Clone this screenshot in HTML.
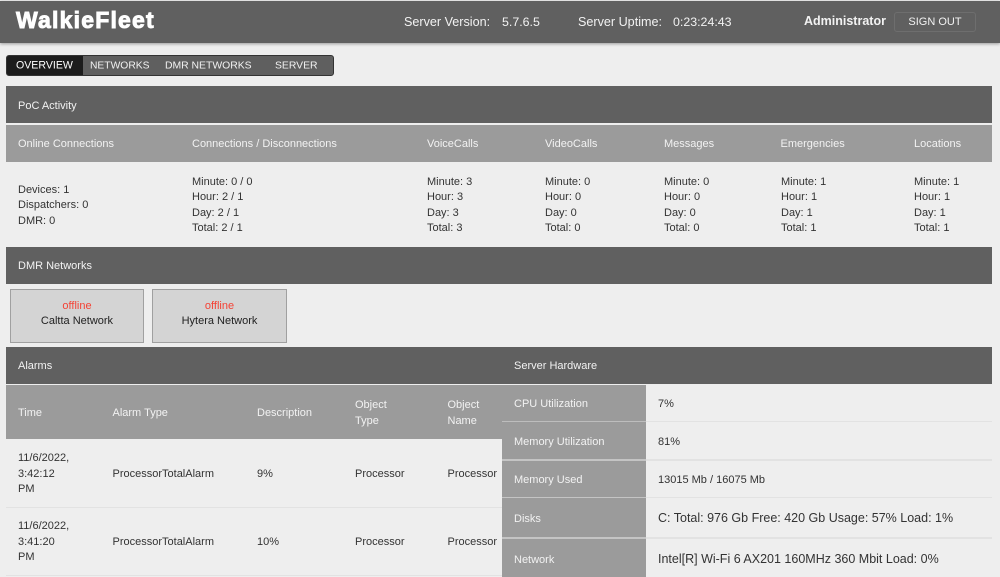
<!DOCTYPE html>
<html><head><meta charset="utf-8"><style>
html,body{margin:0;padding:0;width:1000px;height:577px;overflow:hidden;background:#eeeeee}
body{position:relative;font-family:"Liberation Sans",sans-serif;font-size:11px;color:#333}
.a{position:absolute}
.t{position:absolute;white-space:nowrap;line-height:15px}
.d{background:#606060}
.g{background:#9b9b9b}
.w{color:#f2f2f2}
.m{line-height:15.33px}
</style></head><body>
<div class="a d" style="left:0;top:1px;width:1000px;height:42px;box-shadow:0 1px 3px rgba(0,0,0,.35)"></div>
<div class="t" style="left:16px;top:6px;font-size:23px;line-height:28px;font-weight:bold;color:#fff;-webkit-text-stroke:.9px #fff;letter-spacing:1.2px">WalkieFleet</div>
<div class="t w" style="left:404px;top:15px;font-size:12.6px">Server Version:</div>
<div class="t w" style="left:502px;top:15px;font-size:12.4px">5.7.6.5</div>
<div class="t w" style="left:578px;top:15px;font-size:12.6px">Server Uptime:</div>
<div class="t w" style="left:673px;top:15px;font-size:12.4px">0:23:24:43</div>
<div class="t w" style="left:804px;top:14px;font-size:12.5px;font-weight:bold">Administrator</div>
<div class="a w" style="left:894px;top:12px;width:80px;height:18px;border:1px solid #6e6e6e;border-radius:3px;text-align:center;line-height:19px;font-size:11px">SIGN OUT</div>

<div class="a" style="left:6px;top:55px;width:326px;height:19px;background:#5f5f5f;border:1px solid #333;border-radius:3px;overflow:hidden">
<div class="a" style="left:0;top:0;width:76px;height:19px;background:#1c1c1c"></div></div>
<div class="t" style="left:16px;top:58px;color:#fff;font-size:10.6px;transform:translateY(.7px)">OVERVIEW</div>
<div class="t w" style="left:90px;top:58px;font-size:10.3px;transform:translateY(.7px)">NETWORKS</div>
<div class="t w" style="left:165px;top:58px;font-size:10.4px;transform:translateY(.7px)">DMR NETWORKS</div>
<div class="t w" style="left:275px;top:58px;font-size:10.4px;transform:translateY(.7px)">SERVER</div>

<div class="a d" style="left:6px;top:86px;width:986px;height:37px"></div>
<div class="t w" style="left:18px;top:99px">PoC Activity</div>
<div class="a g" style="left:6px;top:125px;width:986px;height:37px"></div>
<div class="t w" style="left:18px;top:137px">Online Connections</div>
<div class="t w" style="left:192px;top:137px">Connections / Disconnections</div>
<div class="t w" style="left:427px;top:137px">VoiceCalls</div>
<div class="t w" style="left:545px;top:137px">VideoCalls</div>
<div class="t w" style="left:664px;top:137px">Messages</div>
<div class="t w" style="left:780.5px;top:137px">Emergencies</div>
<div class="t w" style="left:914px;top:137px">Locations</div>

<div class="t m" style="left:18px;top:183px">Devices: 1<br>Dispatchers: 0<br>DMR: 0</div>
<div class="t m" style="left:192px;top:175px">Minute: 0 / 0<br>Hour: 2 / 1<br>Day: 2 / 1<br>Total: 2 / 1</div>
<div class="t m" style="left:427px;top:175px">Minute: 3<br>Hour: 3<br>Day: 3<br>Total: 3</div>
<div class="t m" style="left:545px;top:175px">Minute: 0<br>Hour: 0<br>Day: 0<br>Total: 0</div>
<div class="t m" style="left:664px;top:175px">Minute: 0<br>Hour: 0<br>Day: 0<br>Total: 0</div>
<div class="t m" style="left:781px;top:175px">Minute: 1<br>Hour: 1<br>Day: 1<br>Total: 1</div>
<div class="t m" style="left:914px;top:175px">Minute: 1<br>Hour: 1<br>Day: 1<br>Total: 1</div>

<div class="a d" style="left:6px;top:247px;width:986px;height:37px"></div>
<div class="t w" style="left:18px;top:259px">DMR Networks</div>

<div class="a" style="left:10px;top:289px;width:132px;height:52px;background:#d4d4d4;border:1px solid #a0a0a0"></div>
<div class="a" style="left:152px;top:289px;width:133px;height:52px;background:#d4d4d4;border:1px solid #a0a0a0"></div>
<div class="t" style="left:10px;width:134px;text-align:center;top:299px;color:#f44336">offline</div>
<div class="t" style="left:10px;width:134px;text-align:center;top:314px;color:#222">Caltta Network</div>
<div class="t" style="left:152px;width:135px;text-align:center;top:299px;color:#f44336">offline</div>
<div class="t" style="left:152px;width:135px;text-align:center;top:314px;color:#222">Hytera Network</div>

<div class="a d" style="left:6px;top:347px;width:986px;height:37px"></div>
<div class="t w" style="left:18px;top:359px">Alarms</div>
<div class="t w" style="left:514px;top:359px">Server Hardware</div>

<div class="a g" style="left:6px;top:385px;width:496px;height:54px"></div>
<div class="t w" style="left:18px;top:406px">Time</div>
<div class="t w" style="left:112.5px;top:406px">Alarm Type</div>
<div class="t w" style="left:257px;top:406px">Description</div>
<div class="t w" style="left:355px;top:397px;line-height:16px">Object<br>Type</div>
<div class="t w" style="left:447.5px;top:397px;line-height:16px">Object<br>Name</div>

<div class="a" style="left:6px;top:507px;width:496px;height:1px;background:#e2e2e2"></div>
<div class="a" style="left:6px;top:575px;width:496px;height:1px;background:#e2e2e2"></div>
<div class="t" style="left:18px;top:451px;line-height:15.5px">11/6/2022,<br>3:42:12<br>PM</div>
<div class="t" style="left:112.5px;top:467px">ProcessorTotalAlarm</div>
<div class="t" style="left:257px;top:467px">9%</div>
<div class="t" style="left:355px;top:467px">Processor</div>
<div class="t" style="left:447.5px;top:467px">Processor</div>
<div class="t" style="left:18px;top:519px;line-height:15.5px">11/6/2022,<br>3:41:20<br>PM</div>
<div class="t" style="left:112.5px;top:535px">ProcessorTotalAlarm</div>
<div class="t" style="left:257px;top:535px">10%</div>
<div class="t" style="left:355px;top:535px">Processor</div>
<div class="t" style="left:447.5px;top:535px">Processor</div>

<div class="a g" style="left:502px;top:385px;width:144px;height:192px"></div>
<div class="a" style="left:502px;top:421px;width:144px;height:1px;background:#bdbdbd"></div>
<div class="a" style="left:502px;top:459px;width:144px;height:2px;background:#c4c4c4"></div>
<div class="a" style="left:502px;top:497px;width:144px;height:1px;background:#c4c4c4"></div>
<div class="a" style="left:502px;top:537px;width:144px;height:2px;background:#c4c4c4"></div>
<div class="a" style="left:646px;top:421px;width:346px;height:1px;background:#e2e2e2"></div>
<div class="a" style="left:646px;top:459px;width:346px;height:2px;background:#e2e2e2"></div>
<div class="a" style="left:646px;top:497px;width:346px;height:1px;background:#e2e2e2"></div>
<div class="a" style="left:646px;top:537px;width:346px;height:2px;background:#e2e2e2"></div>
<div class="t w" style="left:514px;top:397px">CPU Utilization</div>
<div class="t w" style="left:514px;top:435px">Memory Utilization</div>
<div class="t w" style="left:514px;top:473px">Memory Used</div>
<div class="t w" style="left:514px;top:512px">Disks</div>
<div class="t w" style="left:514px;top:553px">Network</div>
<div class="t" style="left:658px;top:397px">7%</div>
<div class="t" style="left:658px;top:435px">81%</div>
<div class="t" style="left:658px;top:473px">13015 Mb / 16075 Mb</div>
<div class="t" style="left:658px;top:511px;font-size:12.5px">C: Total: 976 Gb Free: 420 Gb Usage: 57% Load: 1%</div>
<div class="t" style="left:658px;top:552px;font-size:12.5px">Intel[R] Wi-Fi 6 AX201 160MHz 360 Mbit Load: 0%</div>
</body></html>
